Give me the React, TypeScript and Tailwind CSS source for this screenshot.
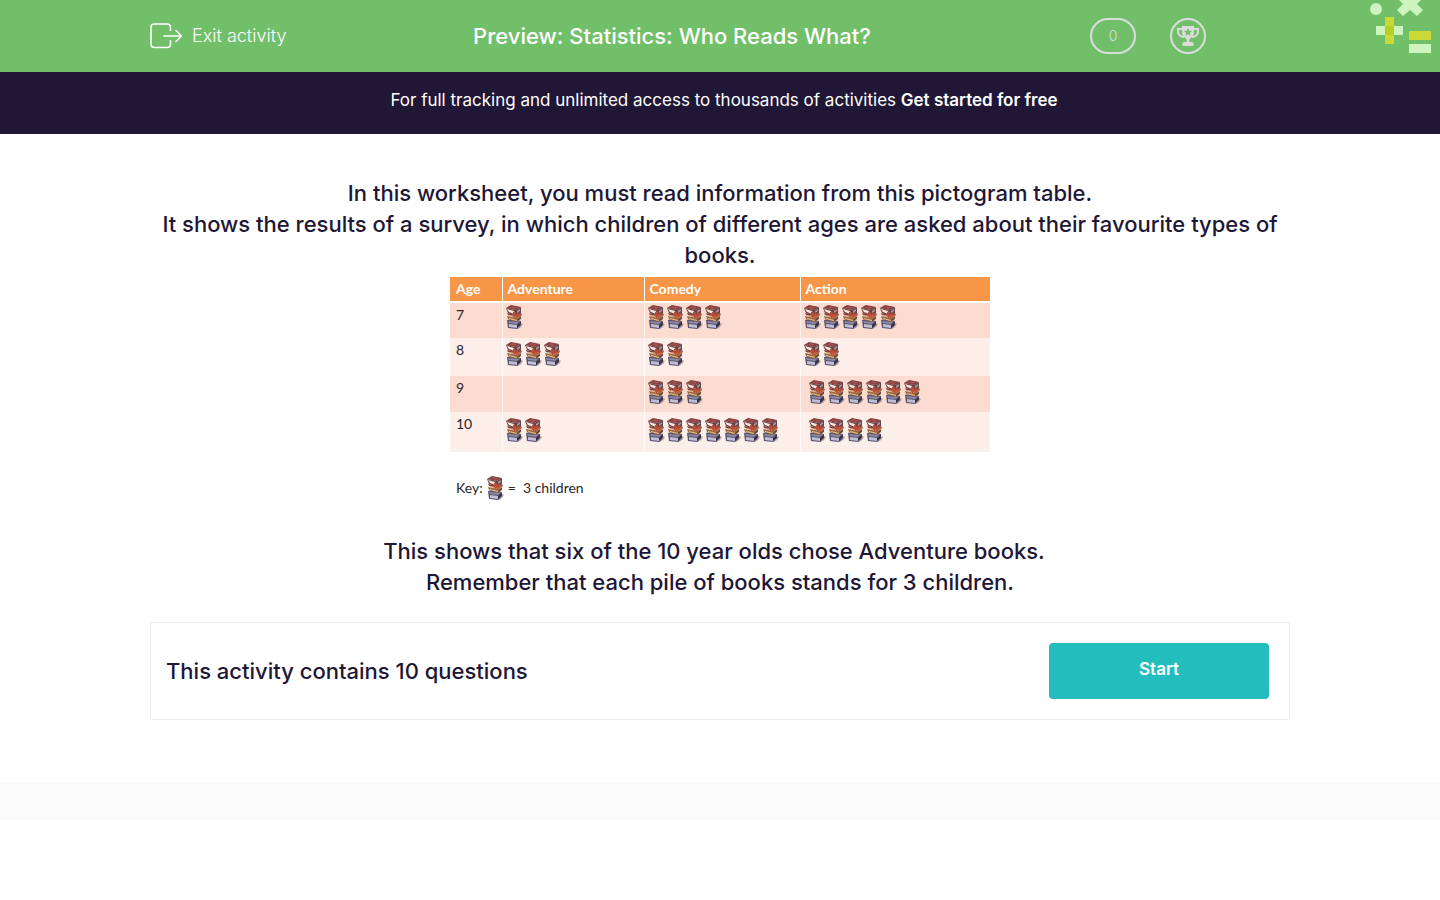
const COLUMNS = [
  { label: 'Age', width: 'w-[52px]' },
  { label: 'Adventure', width: 'w-[142px]' },
  { label: 'Comedy', width: 'w-[156px]' },
  { label: 'Action', width: 'w-[190px]' },
];

const ROWS = [
  { age: 7, books: [1, 4, 5], row: 'h-9 bg-[#fcdcd0]', cell: 'pt-[2px]', last: 'pl-[2px]' },
  { age: 8, books: [3, 2, 2], row: 'h-[38px] bg-[#fceee9]', cell: 'pt-1', last: 'pl-[2px]' },
  { age: 9, books: [0, 3, 6], row: 'h-9 bg-[#fcdcd0]', cell: 'pt-1', last: 'pl-[7px]' },
  { age: 10, books: [2, 7, 4], row: 'h-10 bg-[#fceee9]', cell: 'pt-[6px]', last: 'pl-[7px]' },
];

function Books() {
  return (
    <svg viewBox="0 0 19 24" className="block h-6 w-[19px] shrink-0" aria-hidden="true">
      {/* bottom books */}
      <path d="M11 23l5-5 2 1-2 3-3 2z" fill="#b7a0a8" />
      <path d="M2 15l4-1 10 2v4l-4 4-9-1z" fill="#57546c" />
      <path d="M3 16l9 1 3-1-3 3-8-1z" fill="#8d89a8" />
      <path d="M4 19l8 1v3l-8-1z" fill="#c2bdd6" />
      <path d="M12 20l4-3v2l-4 4z" fill="#35303f" />
      {/* middle books */}
      <path d="M2 11l10 2 4-2v3l-4 3-9-3z" fill="#9a6842" />
      <path d="M4 13l8 2v1l-8-2z" fill="#edc088" />
      <path d="M12 15l4-3v1l-4 3z" fill="#4c3236" />
      <path d="M2 8l9 2 5-2 1 2-5 3-9-3z" fill="#8b4036" />
      <path d="M4 10l7 1v2l-7-2z" fill="#dba683" />
      <path d="M11 11l5-2v1l-4 3z" fill="#c96a48" />
      {/* top books */}
      <path d="M1 3l5-3 10 2-5 3z" fill="#83393a" />
      <path d="M4 3l3-2 6 1-3 2z" fill="#9c514c" />
      <path d="M1 3l10 2v6L3 8z" fill="#6b4043" />
      <path d="M2 4l7 2v3L4 7z" fill="#f4e6e0" />
      <path d="M11 5l5-3v6l-5 3z" fill="#5b4650" />
      <path d="M12 6l3-2v2l-3 2z" fill="#b5969a" />
      <path d="M8 7l2-1 1 3 4-2-2 3 2 2-4-1-1 3-2-3z" fill="#be4b33" />
    </svg>
  );
}

function ExitIcon() {
  return (
    <svg viewBox="0 0 32 26" className="h-[26px] w-8" fill="none" stroke="#fff" strokeWidth="1.6" strokeLinecap="round" strokeLinejoin="round" aria-hidden="true">
      <path d="M20.5 7.5V4.5q0-3.500-3.500-3.500H4.500q-3.500 0-3.500 3.500v16.500q0 3.500 3.500 3.500H17q3.500 0 3.500-3.500v-3.500" />
      <path d="M14 13h17M26 7.500l5.300 5.500-5.300 5.500" />
    </svg>
  );
}

function TrophyIcon() {
  return (
    <svg viewBox="0 0 22 20" className="h-5 w-[22px] shrink-0" aria-hidden="true">
      <path d="M5 3H1v2.500q0 4.500 6 5.500M17 3h4v2.500q0 4.500-6 5.500" fill="none" stroke="#dcdcdc" strokeWidth="2" />
      <path d="M5 0h12v5q0 5-3.500 7.200Q12.300 13 12.300 14v2H15q1.500 0 1.500 2v2h-11v-2q0-2 1.500-2h2.700v-2q0-1-1.200-1.800Q5 10 5 5z" fill="#dcdcdc" />
      <path d="M11 2l1.200 2.700 2.900.3-2.200 1.900.7 2.800L11 8.200 8.400 9.700l.7-2.800L6.900 5l2.900-.3z" fill="#72bf6a" />
    </svg>
  );
}

function MathsSymbols() {
  return (
    <svg viewBox="0 0 70 72" className="pointer-events-none absolute top-0 right-0 h-[72px] w-[70px]" aria-hidden="true">
      <circle cx="6" cy="9" r="6" fill="#cdf3bf" />
      <path d="M27 10l6-6-6-6 6-6 7 7 7-7 6 6-6 6 6 6-6 6-7-6-7 6z" fill="#cdf3bf" />
      <path d="M6 26h27v9H6z" fill="#cdf3bf" />
      <path d="M15 17h9v27h-9z" fill="#cbd935" />
      <path d="M15 26h9v9h-9z" fill="#b5cf24" />
      <path d="M39 31h22v9H39z" fill="#cbd935" />
      <path d="M39 44h22v9H39z" fill="#cdf3bf" />
    </svg>
  );
}

function Header() {
  return (
    <header className="relative bg-[#72bf6a] text-white">
      <div className="mx-auto flex h-[72px] max-w-[1140px] items-center">
        <a href="#exit" className="flex w-36 shrink-0 items-center gap-[10px] text-lg font-light whitespace-nowrap">
          <ExitIcon />
          Exit activity
        </a>
        <h1 className="flex-1 text-center text-[22px] font-medium">Preview: Statistics: Who Reads What?</h1>
        <div className="flex w-60 shrink-0 items-center gap-[34px] pl-10 text-[#dcdcdc]">
          <span className="flex h-9 w-[46px] items-center justify-center rounded-full border-2 border-[#dcdcdc] text-sm font-light">0</span>
          <button type="button" aria-label="Trophies" className="flex size-9 items-center justify-center rounded-full border-2 border-[#dcdcdc]">
            <TrophyIcon />
          </button>
        </div>
      </div>
      <MathsSymbols />
    </header>
  );
}

function Pictogram() {
  return (
    <div className="mx-auto mt-[6px] w-[540px] text-left font-['Lato',sans-serif] text-sm leading-5 font-normal text-[#2b2526]">
      <table className="w-full table-fixed border-collapse">
        <thead>
          <tr className="h-[25px] border-b-2 border-white bg-[#f79646] text-white">
            {COLUMNS.map(c => (
              <th key={c.label} scope="col" className={`${c.width} border-l border-white pl-[5px] font-bold first:border-l-0 first:pl-[6px]`}>
                {c.label}
              </th>
            ))}
          </tr>
        </thead>
        <tbody>
          {ROWS.map(r => (
            <tr key={r.age} className={r.row}>
              <th scope="row" className="pt-[2px] pl-[6px] align-top font-normal">{r.age}</th>
              {r.books.map((count, i) => (
                <td key={i} aria-label={`${count} piles`} className={`border-l border-white/60 align-top ${r.cell} ${i === 2 ? r.last : 'pl-[2px]'}`}>
                  <div className="flex">
                    {Array.from({ length: count }, (_, n) => <Books key={n} />)}
                  </div>
                </td>
              ))}
            </tr>
          ))}
        </tbody>
      </table>
      <div className="mt-6 flex items-center gap-[3px] pl-[6px]">
        <span>Key:</span>
        <Books />
        <span>=&nbsp; 3 children</span>
      </div>
    </div>
  );
}

export default function App() {
  return (
    <div className="min-h-screen bg-white font-['Inter',sans-serif] text-[#201636]">
      <Header />
      <div className="flex h-[62px] items-center justify-center bg-[#201636] pb-1 pl-2 text-[17px] text-white">
        <p>
          For full tracking and unlimited access to thousands of activities{' '}
          <a href="#register" className="font-semibold">Get started for free</a>
        </p>
      </div>

      <main className="mx-auto max-w-[1140px] pt-11 pb-[62px] text-[22px] leading-[31px] font-medium">
        <section className="text-center">
          <p>In this worksheet, you must read information from this pictogram table.</p>
          <p>It shows the results of a survey, in which children of different ages are asked about their favourite types of books.</p>
          <Pictogram />
          <p className="mt-9 pr-3">This shows that six of the 10 year olds chose Adventure books.</p>
          <p>Remember that each pile of books stands for 3 children.</p>
        </section>

        <section className="mt-6 flex items-center justify-between rounded-xs border border-[#ececec] py-5 pr-5 pl-[15px]">
          <p>This activity contains 10 questions</p>
          <button type="button" className="h-14 w-[220px] rounded bg-[#24bdbe] pb-1 text-[17px] font-semibold text-white">
            Start
          </button>
        </section>
      </main>

      <footer className="h-[38px] bg-[#fafafa]" />
    </div>
  );
}
